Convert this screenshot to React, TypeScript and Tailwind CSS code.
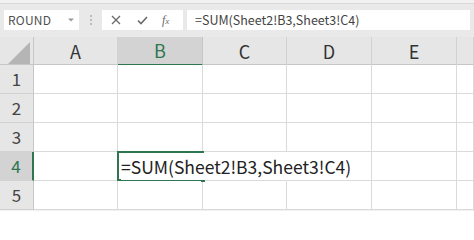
const COLS = ['A', 'B', 'C', 'D', 'E', '']
const ROWS = [1, 2, 3, 4, 5]
const GRID = 'grid grid-cols-[34px_84px_85px_84px_85px_85px_1fr]'
const GREEN = '#2e7650'

function Toolbar() {
  return (
    <div className="h-[34px] border-t border-[#d9d9d9] mt-[3px] pt-[6px] px-[4px] flex items-start bg-[#e9e9e9]">
      {/* Name box */}
      <div className="w-[75px] h-[20px] bg-white flex items-center justify-between pl-[4px] pr-[5px]">
        <span className="text-[12px] text-[#505050] tracking-[0.2px]">ROUND</span>
        <svg width="6" height="4" viewBox="0 0 6 4">
          <path d="M0 0.5 L6 0.5 L3 3.5 Z" fill="#9a9a9a" />
        </svg>
      </div>
      <div className="w-[23px] h-[20px] flex flex-col items-center justify-center gap-[2px]">
        <span className="w-[2px] h-[2px] bg-[#bdbdbd]" />
        <span className="w-[2px] h-[2px] bg-[#bdbdbd]" />
        <span className="w-[2px] h-[2px] bg-[#bdbdbd]" />
      </div>
      {/* Cancel / enter / fx */}
      <div className="w-[81px] h-[20px] bg-white flex items-center pl-[9px]">
        <svg width="10" height="10" viewBox="0 0 10 10" className="mr-[16px]">
          <path d="M1 1 L9 9 M9 1 L1 9" stroke="#6a6a6a" strokeWidth="1.3" />
        </svg>
        <svg width="11" height="9" viewBox="0 0 11 9" className="mr-[14px]">
          <path d="M1 4.5 L4 7.5 L10 1" stroke="#6a6a6a" strokeWidth="1.6" fill="none" />
        </svg>
        <span className="text-[12px] italic text-[#6a6a6a] leading-none font-['Liberation_Serif',serif]">
          f<span className="text-[9px]">x</span>
        </span>
      </div>
      {/* Formula bar */}
      <div className="ml-[4px] flex-1 h-[20px] bg-white flex items-center pl-[8px]">
        <span className="text-[12.5px] text-[#444]">=SUM(Sheet2!B3,Sheet3!C4)</span>
      </div>
    </div>
  )
}

function HeaderRow() {
  return (
    <div className={`${GRID} h-[28px] bg-[#e6e6e6] border-b border-[#c6c6c6]`}>
      <div className="relative border-r border-[#c6c6c6]">
        <svg width="22" height="22" viewBox="0 0 22 22" className="absolute right-[3px] bottom-[2px]">
          <path d="M22 0 L22 22 L0 22 Z" fill="#b5b5b5" />
        </svg>
      </div>
      {COLS.map((c, i) =>
        c === 'B' ? (
          <div
            key={i}
            className="flex items-center justify-center bg-[#d3d3d3] border-r border-[#c6c6c6] border-b-2 border-b-[#2e7650] text-[18px] text-[#2e7650]"
          >
            {c}
          </div>
        ) : (
          <div key={i} className="flex items-center justify-center border-r border-[#d2d2d2] text-[18px] text-[#333]">
            {c}
          </div>
        )
      )}
    </div>
  )
}

function Row({ n }: { n: number }) {
  const active = n === 4
  return (
    <div className={`${GRID} h-[29px]`}>
      <div
        className={`flex items-center justify-center text-[17px] border-b border-[#d2d2d2] ${
          active
            ? 'bg-[#d3d3d3] text-[#2e7650] border-r-2 border-r-[#2e7650]'
            : 'bg-[#e6e6e6] text-[#444] border-r border-r-[#c6c6c6]'
        }`}
      >
        {n}
      </div>
      {COLS.map((c, i) => {
        if (active && c === 'B') {
          return (
            <div key={i} className="relative bg-white border-b border-[#dadada]">
              <div
                className="absolute left-[-1px] top-[-1px] w-[86px] h-[30px] border-2 border-r-0"
                style={{ borderColor: GREEN }}
              />
              <div className="absolute right-[-1px] top-[-1px] w-[2px] h-[3px]" style={{ background: GREEN }} />
              <div className="absolute right-[-2px] bottom-[-2px] w-[4px] h-[4px]" style={{ background: GREEN }} />
              <span className="absolute left-[3px] top-[1px] whitespace-nowrap bg-white text-[17.5px] text-[#222] leading-[27px] pr-[2px] z-10">
                =SUM(Sheet2!B3,Sheet3!C4)
              </span>
            </div>
          )
        }
        const hideRight = active && c === 'C'
        return (
          <div
            key={i}
            className={`bg-white border-b border-[#dadada] border-r ${hideRight ? 'border-r-white' : 'border-r-[#dadada]'}`}
          />
        )
      })}
    </div>
  )
}

export default function App() {
  return (
    <div className="w-[474px] h-[211px] overflow-hidden bg-[#f1f1f1] font-['Noto_Sans_CJK_JP','Noto_Sans',sans-serif]">
      <Toolbar />
      <HeaderRow />
      {ROWS.map(n => (
        <Row key={n} n={n} />
      ))}
    </div>
  )
}
